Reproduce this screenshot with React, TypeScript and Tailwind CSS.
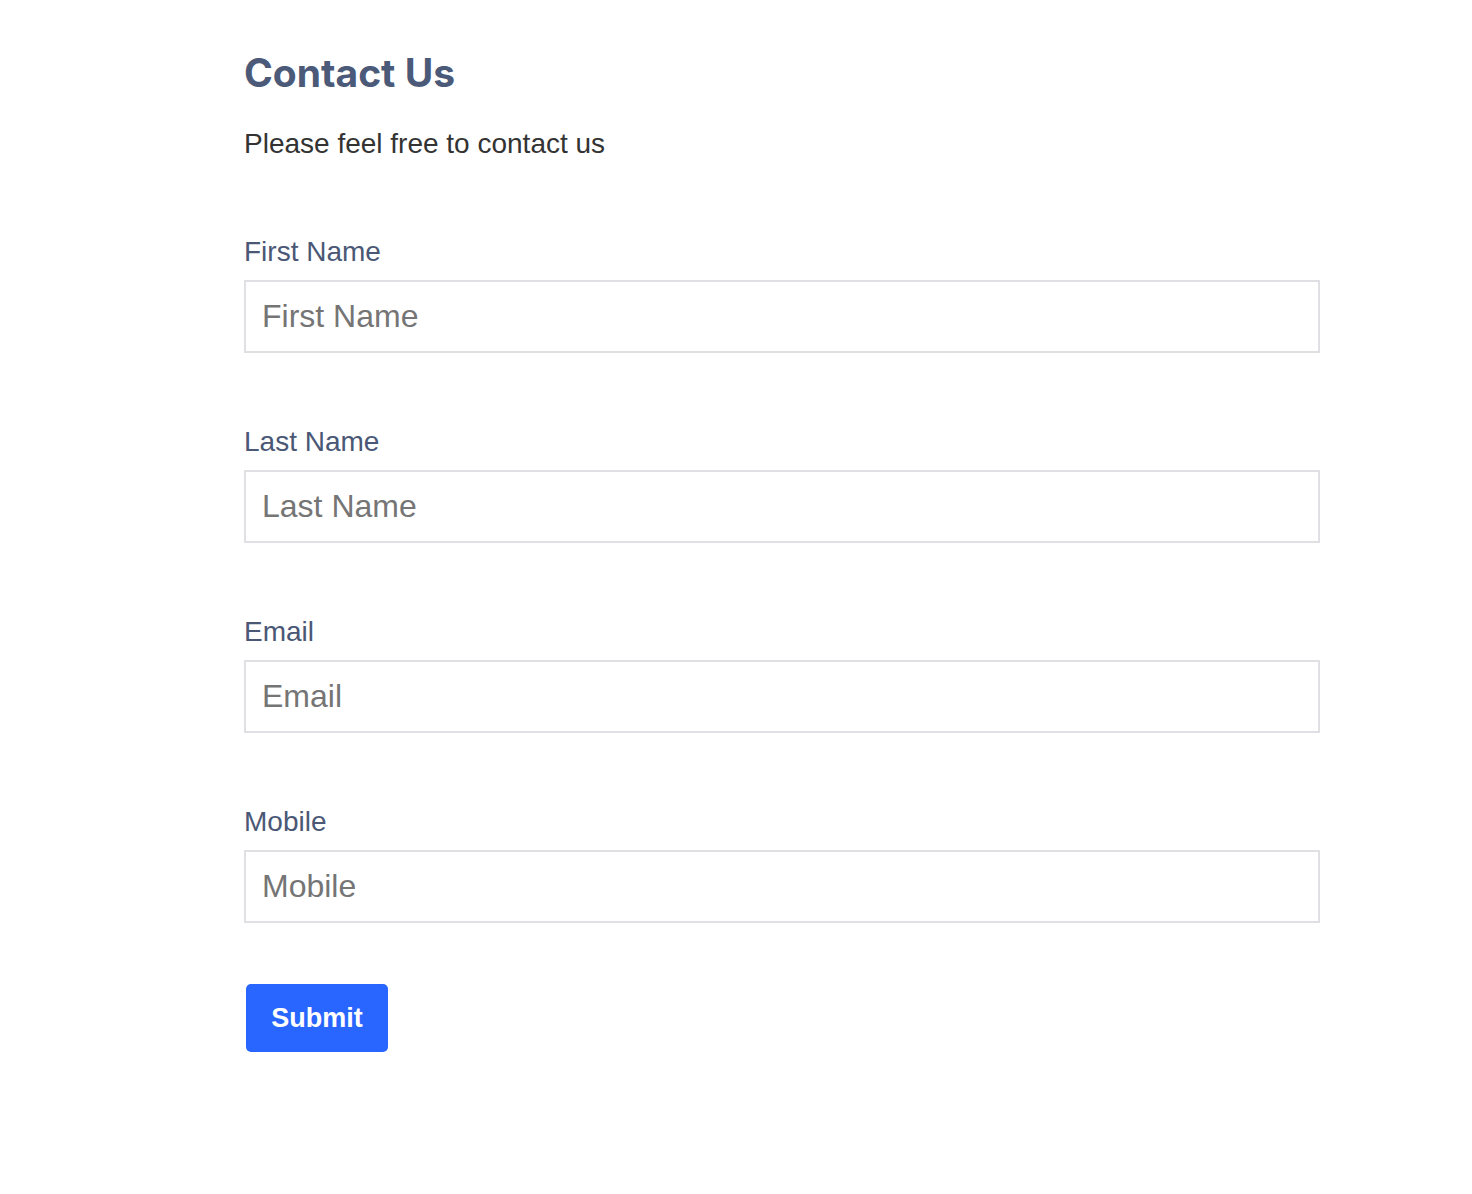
const fields = [
  { label: "First Name", type: "text" },
  { label: "Last Name", type: "text" },
  { label: "Email", type: "email" },
  { label: "Mobile", type: "tel" },
];

export default function App() {
  return (
    <div className="min-h-screen bg-white font-['Liberation_Sans',Arial,sans-serif]">
      <div className="ml-[244px] w-[1076px] pt-[47px]">
        <h1 className="font-['Inter',sans-serif] text-[39px] font-bold leading-[52px] text-[#4b5a78]">
          Contact Us
        </h1>
        <p className="mt-[27px] text-[28px] leading-[36px] text-[#333333]">
          Please feel free to contact us
        </p>

        <form className="mt-[72px]" onSubmit={(e) => e.preventDefault()}>
          {fields.map((field) => (
            <div key={field.label} className="mb-[71px]">
              <label className="block text-[28px] leading-[36px] text-[#4a5876]">
                {field.label}
              </label>
              <input
                type={field.type}
                placeholder={field.label}
                className="mt-[10px] block h-[73px] w-full border-2 border-[#e0dfe3] px-[16px] text-[32px] text-[#333] outline-none placeholder:text-[#757575]"
              />
            </div>
          ))}
          <button
            type="submit"
            className="-mt-[10px] ml-[2px] h-[68px] w-[142px] rounded-[5px] bg-[#2866ff] text-[27px] font-bold text-white"
          >
            Submit
          </button>
        </form>
      </div>
    </div>
  );
}
